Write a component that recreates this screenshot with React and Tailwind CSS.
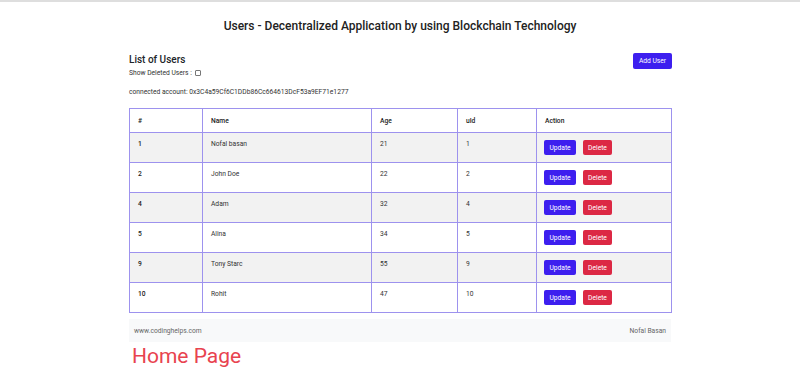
import React from "react";

const users = [
  { id: "1", name: "Nofal basan", age: "21", uid: "1" },
  { id: "2", name: "John Doe", age: "22", uid: "2" },
  { id: "4", name: "Adam", age: "32", uid: "4" },
  { id: "5", name: "Alina", age: "34", uid: "5" },
  { id: "9", name: "Tony Starc", age: "55", uid: "9" },
  { id: "10", name: "Rohit", age: "47", uid: "10" },
];

export default function App() {
  return (
    <div className="w-[800px] h-[378px] bg-white overflow-hidden text-[#212529]" style={{ fontFamily: "Roboto, 'Liberation Sans', sans-serif" }}>
      <div className="h-[2px] bg-[#dedede]" />
      <h1 className="text-center text-[12px] font-medium leading-none mt-[18px] text-[#222]">
        Users - Decentralized Application by using Blockchain Technology
      </h1>
      <div className="w-[542px] mx-auto mt-[20px]">
        <div className="flex justify-between items-start">
          <div>
            <div className="text-[10px] font-medium leading-none mt-[3px]">List of Users</div>
            <div className="flex items-center text-[6.7px] leading-none mt-[5px] text-[#333]">
              Show Deleted Users :
              <span className="inline-block w-[6px] h-[6px] border-[0.5px] border-[#777] ml-[3px] rounded-[1px]" />
            </div>
          </div>
          <button className="bg-[#3d1fef] text-white text-[6.7px] rounded-[2px] w-[39px] h-[16px] mt-[1px] mr-[-1px] leading-none">
            Add User
          </button>
        </div>
        <div className="text-[6.7px] leading-none mt-[12px] text-[#333]">
          connected account: 0x3C4a59Cf6C1DDb86Cc664613DcF53a9EF71e1277
        </div>
        <table className="border-collapse w-[542px] mt-[13px] text-[6.7px] leading-none table-fixed text-[#333]">
          <colgroup>
            <col className="w-[73px]" />
            <col className="w-[169px]" />
            <col className="w-[86px]" />
            <col className="w-[79px]" />
            <col className="w-[135px]" />
          </colgroup>
          <thead>
            <tr className="h-[24px] bg-white">
              {["#", "Name", "Age", "uId", "Action"].map((h) => (
                <th key={h} className="border border-[#9d92ee] text-left font-medium text-[#222] px-[8px] align-middle">
                  {h}
                </th>
              ))}
            </tr>
          </thead>
          <tbody>
            {users.map((u, i) => (
              <tr key={u.id} className={i % 2 === 0 ? "h-[30px] bg-[#f2f2f2]" : "h-[30px] bg-white"}>
                <td className="border border-[#9d92ee] px-[8px] pt-[8px] align-top font-medium text-[#222]">{u.id}</td>
                <td className="border border-[#9d92ee] px-[8px] pt-[8px] align-top">{u.name}</td>
                <td className="border border-[#9d92ee] px-[8px] pt-[8px] align-top">{u.age}</td>
                <td className="border border-[#9d92ee] px-[8px] pt-[8px] align-top">{u.uid}</td>
                <td className="border border-[#9d92ee] px-[7px] align-middle">
                  <div className="flex gap-[7px]">
                    <button className="bg-[#3d1fef] text-white rounded-[2px] w-[32px] h-[15px] text-[6.7px] leading-none">Update</button>
                    <button className="bg-[#dc2844] text-white rounded-[2px] w-[29px] h-[15px] text-[6.7px] leading-none">Delete</button>
                  </div>
                </td>
              </tr>
            ))}
          </tbody>
        </table>
        <div className="mt-[6px] h-[23px] bg-[#f8f9fa] flex items-center justify-between px-[5px] text-[6.7px] text-[#666]">
          <span>www.codinghelps.com</span>
          <span>Nofal Basan</span>
        </div>
        <div className="text-[21px] leading-none text-[#e8434f] mt-[4px] ml-[3px]">Home Page</div>
      </div>
    </div>
  );
}
